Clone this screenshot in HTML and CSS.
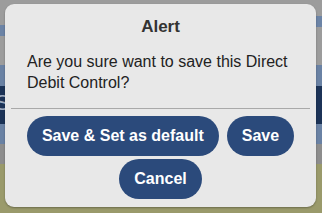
FILE: index.html
```html
<!DOCTYPE html>
<html>
<head>
    <title>Alert</title>
    <link rel="stylesheet" href="styles.css">
</head>
<body>
    <div class="page">
        <div class="gap" style="height:16px"></div>
        <div class="split">
            <div class="half left"><div class="strip"></div></div>
            <div class="half right"><div class="strip"></div></div>
        </div>
        <div class="gap" style="height:29px"></div>
        <div class="band-blue" style="height:21px"></div>
        <div class="band-navy"><span class="navy-text">S</span></div>
        <div class="band-blue" style="height:20px"></div>
        <div class="gap dark" style="height:20px"></div>
        <div class="band-olive"></div>
    </div>

    <div class="alert">
        <div class="alert-title">Alert</div>
        <div class="alert-msg">Are you sure want to save this Direct Debit Control?</div>
        <hr class="alert-line">
        <div class="alert-btns">
            <button class="btn">Save &amp; Set as default</button>
            <button class="btn">Save</button>
            <button class="btn">Cancel</button>
        </div>
    </div>
</body>
</html>
```

FILE: styles.css
```css
body{margin:0;width:322px;height:213px;overflow:hidden;position:relative;
    background:#9b9b9b;font-family:"Liberation Sans", Arial, sans-serif;}

.page{display:flex;flex-direction:column;height:213px;}
.gap{background:#9c9c9c;}
.gap.dark{background:#8d8d8d;}
.split{display:flex;height:20px;}
.half{flex:1;background:#9c9c9c;}
.left{padding-top:9px;}
.strip{height:11px;background:#6c84a6;}
.band-blue{background:#6a82a4;}
.band-navy{height:38px;background:#1c3357;overflow:hidden;}
.navy-text{display:block;margin:4px 0 0 -5px;color:#9eabbf;font-size:22px;line-height:26px;}
.band-olive{flex:1;background:#9a9a6b;}

/* dialog sits over the page */
.alert{position:absolute;left:5px;top:4px;width:311px;height:203px;box-sizing:border-box;
    background:#e8e8e8;border-radius:9px;box-shadow:0 1px 2px rgba(0,0,0,0.3);
    padding:13px 0 8px;}

.alert-title{text-align:center;font-size:17px;font-weight:bold;line-height:20px;color:#333;}

.alert-msg{margin-top:14px;padding:0 22px;font-size:16px;line-height:21px;color:#222;}

.alert-line{margin:15px 6px 0;border:0;border-top:1px solid #a9a9a9;height:0;}

.alert-btns{margin-top:7px;display:flex;flex-wrap:wrap;justify-content:center;gap:3px 8px;}

.btn{height:40px;padding:0 15px;border:0;border-radius:20px;background:#2b4a7b;color:#FFF;
    font-family:"Liberation Sans", Arial, sans-serif;font-size:16px;font-weight:bold;}
```
